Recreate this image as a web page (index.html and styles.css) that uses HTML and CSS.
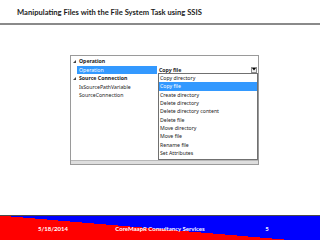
FILE: index.html
```html
<!DOCTYPE html>
<html lang="en">
<head>
    <meta charset="UTF-8">
    <meta name="viewport" content="width=device-width, initial-scale=1.0">
    <title>Manipulating Files with the File System Task using SSIS</title>
    <link rel="stylesheet" href="styles.css">
</head>
<body>

    <div class="slide">

        <!-- Slide title -->
        <header class="title-bar">
            <h1>Manipulating Files with the File System Task using SSIS</h1>
        </header>

        <!-- Property grid screenshot -->
        <main class="content">
            <div class="prop-grid">
                <div class="row category">
                    <span class="toggle"><svg width="3" height="3" viewBox="0 0 4 4"><polygon points="4,0 4,4 0,4" fill="#444"></polygon></svg></span>
                    <span class="name">Operation</span>
                </div>
                <div class="row selected">
                    <span class="toggle"></span>
                    <span class="name">Operation</span>
                    <span class="value edit">Copy file<span class="drop-btn"><svg width="4" height="3" viewBox="0 0 4 3"><polygon points="0,0 4,0 2,2.5" fill="#000"></polygon></svg></span></span>
                </div>
                <div class="row category">
                    <span class="toggle"><svg width="3" height="3" viewBox="0 0 4 4"><polygon points="4,0 4,4 0,4" fill="#444"></polygon></svg></span>
                    <span class="name">Source Connection</span>
                </div>
                <div class="row">
                    <span class="toggle"></span>
                    <span class="name">IsSourcePathVariable</span>
                    <span class="value"></span>
                </div>
                <div class="row">
                    <span class="toggle"></span>
                    <span class="name">SourceConnection</span>
                    <span class="value"></span>
                </div>
                <div class="filler"></div>
                <div class="h-scroll"></div>

                <!-- Open dropdown list -->
                <ul class="dropdown">
                    <li>Copy directory</li>
                    <li class="active">Copy file</li>
                    <li>Create directory</li>
                    <li>Delete directory</li>
                    <li>Delete directory content</li>
                    <li>Delete file</li>
                    <li>Move directory</li>
                    <li>Move file</li>
                    <li>Rename file</li>
                    <li>Set Attributes</li>
                </ul>
            </div>
        </main>

        <!-- Slide footer -->
        <footer class="footer">
            <span>5/18/2014</span>
            <span>CoreMaapR Consultancy Services</span>
            <span>5</span>
        </footer>

    </div>

</body>
</html>
```

FILE: styles.css
```css
body {
    margin: 0;
    background-color: white;
    font-family: "Noto Sans", sans-serif;
}
.slide {
    width: 320px;
    height: 240px;
    display: flex;
    flex-direction: column;
    overflow: hidden;
}

/* Title */
.title-bar {
    height: 23px;
    border-bottom: 2px solid #8a8a8a;
    padding-left: 17px;
    display: flex;
    align-items: center;
}
.title-bar h1 {
    margin: 0;
    font-family: Lato, sans-serif;
    font-weight: bold;
    font-size: 7.6px;
    color: #1c1c1c;
    padding-top: 1px;
}

/* Property grid */
.content {
    padding: 30px 0 0 70px;
}
.prop-grid {
    position: relative;
    width: 187px;
    height: 107px;
    border: 1px solid #9a9a9a;
    padding-top: 1px;
    box-sizing: content-box;
    display: flex;
    flex-direction: column;
    font-size: 5.2px;
    color: #222;
}
.row {
    display: flex;
    height: 8.5px;
    line-height: 8.5px;
    flex-shrink: 0;
}
.toggle {
    width: 6px;
    display: flex;
    align-items: center;
    justify-content: center;
}
.name {
    width: 80px;
    padding-left: 2px;
    box-sizing: border-box;
    white-space: nowrap;
}
.value {
    margin-left: 1px;
    flex: 1;
    padding-left: 1px;
    position: relative;
}
.category .name {
    font-weight: bold;
    width: auto;
}
.selected .name {
    background-color: #3399ff;
    color: white;
}
.value.edit {
    font-weight: bold;
}
.drop-btn {
    position: absolute;
    right: 1px;
    top: 1px;
    width: 6px;
    height: 6px;
    border: 1px solid #8c8c8c;
    background-color: #f0f0f0;
    box-sizing: border-box;
    display: flex;
    align-items: center;
    justify-content: center;
}
.filler {
    flex: 1;
}
.h-scroll {
    height: 3px;
    border-top: 1px solid #b8b8b8;
    background-color: #dedede;
}

/* Dropdown */
.dropdown {
    position: absolute;
    left: 87px;
    top: 17px;
    width: 100px;
    margin: 0;
    padding: 0 0 2px;
    list-style: none;
    background-color: white;
    border: 1px solid #707070;
    box-sizing: border-box;
}
.dropdown li {
    height: 8.3px;
    display: flex;
    align-items: center;
    padding-left: 1px;
    white-space: nowrap;
}
.dropdown li.active {
    background-color: #3399ff;
    color: white;
}

/* Footer */
.footer {
    margin-top: auto;
    height: 24px;
    border-top: 1px solid #4a4a4a;
    background:
        linear-gradient(to bottom left, #0000ff 50%, #ff0000 50%) 5px 0 / 285px 100% no-repeat,
        linear-gradient(to right, #ff0000 5px, #0000ff 5px);
    display: grid;
    grid-template-columns: 106px 108px 106px;
    align-items: center;
    font-family: Lato, sans-serif;
    font-weight: bold;
    font-size: 6px;
    color: white;
    text-align: center;
}
```
